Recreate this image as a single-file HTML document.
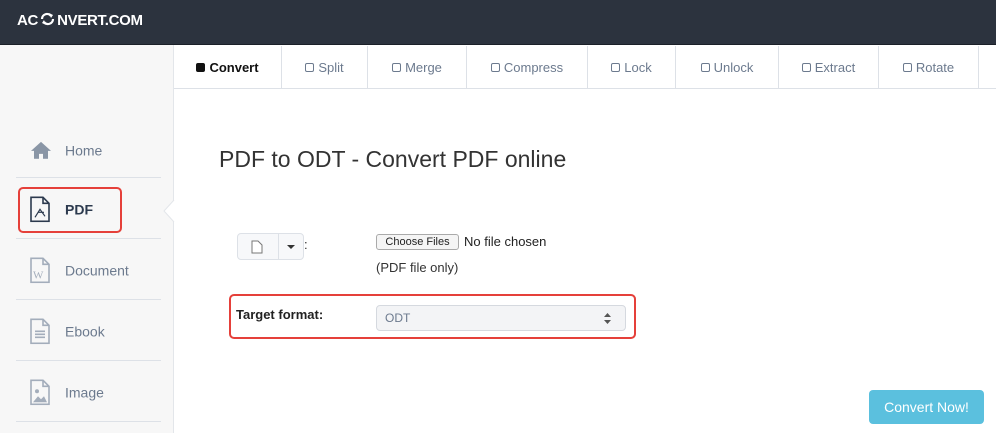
<!DOCTYPE html>
<html><head><style>
*{box-sizing:border-box;margin:0;padding:0}
body{width:996px;height:433px;overflow:hidden;font-family:"Liberation Sans",sans-serif;background:#fff;position:relative}
.hdr{position:absolute;left:0;top:0;width:996px;height:45px;background:#2c333e;border-bottom:1px solid #1b2028}
.logo{position:absolute;left:17px;top:12px;color:#fff;font-weight:bold;font-size:15px;letter-spacing:-0.3px}
.side{position:absolute;left:0;top:45px;width:174px;height:388px;background:#f7f7f7;border-right:1px solid #e3e6ea}
.item{position:absolute;left:16px;width:145px;height:61px;border-bottom:1px solid #dde1e7;color:#6c7a8e;font-size:14px}
.item span{position:absolute;left:49px;top:50%;transform:translateY(-40%)}
.item svg{position:absolute;left:14px;top:50%;transform:translateY(-45%)}
.tabs{position:absolute;left:174px;top:46px;width:822px;height:43px;border-bottom:1px solid #dde1e7}
.tab{position:absolute;top:0;height:42px;border-right:1px solid #dde1e7;color:#6c7a8e;font-size:13px;text-align:center;line-height:43px}
.cb{display:inline-block;width:9px;height:9px;border:1px solid #6c7a8e;border-radius:2px;margin-right:4px;vertical-align:-0px}
</style></head><body>
<div class="hdr"><div class="logo">AC<svg width="17" height="14" viewBox="0 0 17 14" style="vertical-align:-1px;margin:0 1px"><path d="M3 7a5 5 0 0 1 9-3M14 7a5 5 0 0 1-9 3" stroke="#fff" stroke-width="2.2" fill="none"/><path d="M10 1l4 2-2 3zM7 13l-4-2 2-3z" fill="#fff"/></svg>NVERT.COM</div></div>
<div class="side">
<div class="item" style="top:76px;height:57px"><svg width="22" height="18" viewBox="0 0 22 18"><path d="M11 1L1 10h3v8h5v-5h4v5h5v-8h3z" fill="#8a96a6"/></svg><span>Home</span></div>
<div class="item" style="top:133px"><svg width="20" height="26" viewBox="0 0 20 26"><path d="M1 1h12l6 6v18H1z M13 1v6h6" stroke="#2c3a4e" stroke-width="1.6" fill="none"/><path d="M5 21l5-8 5 7M8 16h6" stroke="#2c3a4e" stroke-width="1.2" fill="none"/></svg><span style="color:#2c3a4e;font-weight:bold">PDF</span></div>
<div class="item" style="top:194px"><svg width="20" height="26" viewBox="0 0 20 26"><path d="M1 1h12l6 6v18H1z M13 1v6h6" stroke="#a3adbb" stroke-width="1.6" fill="none"/><text x="3" y="21" font-size="11" fill="#a3adbb" font-family="Liberation Serif">W</text></svg><span>Document</span></div>
<div class="item" style="top:255px"><svg width="20" height="26" viewBox="0 0 20 26"><path d="M1 1h12l6 6v18H1z M13 1v6h6 M5 13h10M5 16h10M5 19h10" stroke="#a3adbb" stroke-width="1.6" fill="none"/></svg><span>Ebook</span></div>
<div class="item" style="top:316px"><svg width="20" height="26" viewBox="0 0 20 26"><path d="M1 1h12l6 6v18H1z M13 1v6h6" stroke="#a3adbb" stroke-width="1.6" fill="none"/><path d="M3 23l5-6 3 3 3-3 3 6z" fill="#a3adbb"/><circle cx="7" cy="12" r="2" fill="#a3adbb"/></svg><span>Image</span></div>
</div>
<div style="position:absolute;left:18px;top:187px;width:104px;height:46px;border:2px solid #e5403a;border-radius:5px"></div>
<svg style="position:absolute;left:163px;top:200px" width="12" height="22"><path d="M11 0L1 11l10 11" fill="#fff" stroke="#e3e6ea"/></svg>
<div class="tabs">
<div class="tab" style="left:0;width:108px;color:#111;font-weight:bold"><span class="cb" style="background:#111;border-color:#111"></span>Convert</div>
<div class="tab" style="left:108px;width:86px"><span class="cb"></span>Split</div>
<div class="tab" style="left:194px;width:99px"><span class="cb"></span>Merge</div>
<div class="tab" style="left:293px;width:121px"><span class="cb"></span>Compress</div>
<div class="tab" style="left:414px;width:88px"><span class="cb"></span>Lock</div>
<div class="tab" style="left:502px;width:103px"><span class="cb"></span>Unlock</div>
<div class="tab" style="left:605px;width:100px"><span class="cb"></span>Extract</div>
<div class="tab" style="left:705px;width:100px"><span class="cb"></span>Rotate</div>
</div>
<div style="position:absolute;left:219px;top:146px;font-size:23px;color:#333">PDF to ODT - Convert PDF online</div>
<div style="position:absolute;left:237px;top:233px;width:67px;height:27px;border:1px solid #dde1e7;border-radius:4px;background:#f7f8fa">
<div style="position:absolute;left:40px;top:0;width:1px;height:25px;background:#dde1e7"></div>
<svg style="position:absolute;left:13px;top:6px" width="12" height="14"><path d="M1 1h6l4 4v8H1z" stroke="#777" fill="#fff"/></svg>
<svg style="position:absolute;left:49px;top:11px" width="8" height="5"><path d="M0 0h8L4 4z" fill="#333"/></svg></div>
<div style="position:absolute;left:304px;top:237px;font-size:13px;color:#333">:</div>
<div style="position:absolute;left:376px;top:234px;width:83px;height:16px;border:1px solid #aaa;border-radius:3px;background:#f5f5f5;font-size:11px;line-height:14px;text-align:center;color:#222">Choose Files</div>
<div style="position:absolute;left:464px;top:234px;font-size:13px;color:#222">No file chosen</div>
<div style="position:absolute;left:376px;top:260px;font-size:13px;color:#333">(PDF file only)</div>
<div style="position:absolute;left:229px;top:294px;width:407px;height:45px;border:2px solid #e5403a;border-radius:5px"></div>
<div style="position:absolute;left:236px;top:307px;font-size:13px;font-weight:bold;color:#222">Target format:</div>
<div style="position:absolute;left:376px;top:305px;width:250px;height:26px;border:1px solid #d5d9df;border-radius:4px;background:#f3f4f6;font-size:12px;color:#6c7a8e;line-height:25px;padding-left:8px">ODT<svg style="position:absolute;right:14px;top:7px" width="7" height="11"><path d="M0 4L3.5 0 7 4zM0 7l3.5 4L7 7z" fill="#555"/></svg></div>
<div style="position:absolute;left:869px;top:390px;width:115px;height:34px;background:#5bc0de;border-radius:4px;color:#fff;font-size:14px;text-align:center;line-height:34px">Convert Now!</div>
</body></html>
